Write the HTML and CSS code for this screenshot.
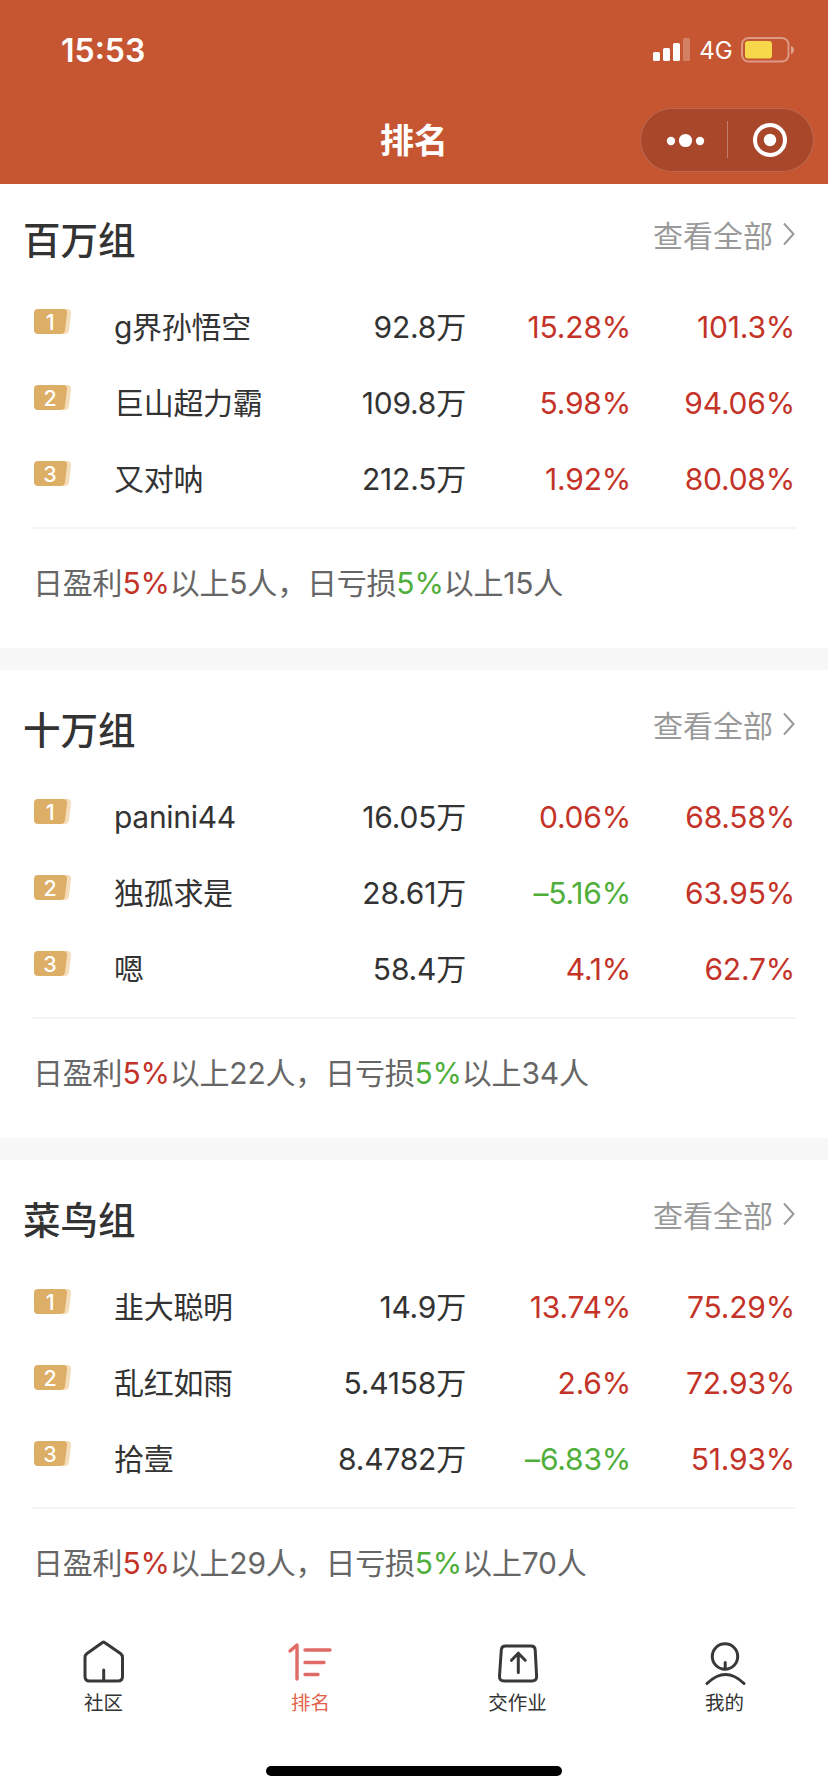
FILE: index.html
```html
<!DOCTYPE html>
<html lang="zh-CN">
<head>
    <meta charset="UTF-8">
    <meta name="viewport" content="width=device-width, initial-scale=1.0">
    <title>排名</title>
    <link rel="stylesheet" href="styles.css">
</head>
<body>
    <header class="header">
        <div class="status-bar">
            <span class="time">15:53</span>
            <div class="status-icons">
                <svg class="signal" width="38" height="24" viewBox="0 0 38 24" fill="#fff">
                    <rect x="0" y="14" width="7" height="9" rx="1.6"/>
                    <rect x="10" y="10" width="7" height="13" rx="1.6"/>
                    <rect x="20" y="5" width="7" height="18" rx="1.6"/>
                    <rect x="30" y="0" width="7" height="23" rx="1.6" opacity="0.25"/>
                </svg>
                <span class="network">4G</span>
                <svg class="battery" width="54" height="26" viewBox="0 0 54 26">
                    <rect x="1" y="1" width="46.5" height="23.5" rx="6.5" fill="none" stroke="#fff" stroke-opacity="0.4" stroke-width="2"/>
                    <rect x="4" y="4" width="27" height="17.5" rx="3" fill="#f7d84a"/>
                    <path d="M50 9 C54 10 54 16 50 17 Z" fill="#fff" fill-opacity="0.45"/>
                </svg>
            </div>
        </div>
        <div class="nav-bar">
            <h1>排名</h1>
            <div class="capsule">
                <svg width="174" height="64" viewBox="0 0 174 64" fill="#fff">
                    <circle cx="31" cy="33" r="4.2"/>
                    <circle cx="45.5" cy="32.5" r="6.6"/>
                    <circle cx="60" cy="33" r="4.2"/>
                    <rect x="87" y="13" width="1" height="37" opacity="0.3"/>
                    <circle cx="130" cy="32" r="15" fill="none" stroke="#fff" stroke-width="4"/>
                    <circle cx="130" cy="32" r="6.2"/>
                </svg>
            </div>
        </div>
    </header>

    <main class="content">
        <section class="group">
            <div class="group-head">
                <h2>百万组</h2>
                <a class="more">查看全部<svg width="14" height="24" viewBox="0 0 14 24"><path d="M2 1.5 L11.5 12 L2 22.5"/></svg></a>
            </div>
            <ul class="rank-list">
                <li><span class="badge">1</span><span class="name">g界孙悟空</span><span>92.8万</span><span class="up">15.28%</span><span class="up">101.3%</span></li>
                <li><span class="badge">2</span><span class="name">巨山超力霸</span><span>109.8万</span><span class="up">5.98%</span><span class="up">94.06%</span></li>
                <li><span class="badge">3</span><span class="name">又对呐</span><span>212.5万</span><span class="up">1.92%</span><span class="up">80.08%</span></li>
            </ul>
            <p class="summary">日盈利<span class="up">5%</span>以上5人，日亏损<span class="down">5%</span>以上15人</p>
        </section>

        <section class="group">
            <div class="group-head">
                <h2>十万组</h2>
                <a class="more">查看全部<svg width="14" height="24" viewBox="0 0 14 24"><path d="M2 1.5 L11.5 12 L2 22.5"/></svg></a>
            </div>
            <ul class="rank-list">
                <li><span class="badge">1</span><span class="name">panini44</span><span>16.05万</span><span class="up">0.06%</span><span class="up">68.58%</span></li>
                <li><span class="badge">2</span><span class="name">独孤求是</span><span>28.61万</span><span class="down">–5.16%</span><span class="up">63.95%</span></li>
                <li><span class="badge">3</span><span class="name">嗯</span><span>58.4万</span><span class="up">4.1%</span><span class="up">62.7%</span></li>
            </ul>
            <p class="summary">日盈利<span class="up">5%</span>以上22人，日亏损<span class="down">5%</span>以上34人</p>
        </section>

        <section class="group">
            <div class="group-head">
                <h2>菜鸟组</h2>
                <a class="more">查看全部<svg width="14" height="24" viewBox="0 0 14 24"><path d="M2 1.5 L11.5 12 L2 22.5"/></svg></a>
            </div>
            <ul class="rank-list">
                <li><span class="badge">1</span><span class="name">韭大聪明</span><span>14.9万</span><span class="up">13.74%</span><span class="up">75.29%</span></li>
                <li><span class="badge">2</span><span class="name">乱红如雨</span><span>5.4158万</span><span class="up">2.6%</span><span class="up">72.93%</span></li>
                <li><span class="badge">3</span><span class="name">拾壹</span><span>8.4782万</span><span class="down">–6.83%</span><span class="up">51.93%</span></li>
            </ul>
            <p class="summary">日盈利<span class="up">5%</span>以上29人，日亏损<span class="down">5%</span>以上70人</p>
        </section>
    </main>

    <footer class="tab-bar">
        <nav class="tabs">
            <a class="tab">
                <svg width="48" height="48" viewBox="0 0 48 48">
                    <path d="M24.5 4.5 Q23.5 3.8 22.5 4.5 L7 15.5 Q5 17 5 19.5 V38.5 Q5 43 9.5 43 H38 Q42.5 43 42.5 38.5 V19.5 Q42.5 17 40.5 15.5 Z"/>
                    <path d="M23.7 32 V42"/>
                </svg>
                <span>社区</span>
            </a>
            <a class="tab active">
                <svg width="48" height="48" viewBox="0 0 48 48">
                    <path d="M3 13 L10 7 V41"/>
                    <path d="M18 12 H43 M18 24.5 H37 M18 36.5 H31"/>
                </svg>
                <span>排名</span>
            </a>
            <a class="tab">
                <svg width="48" height="48" viewBox="0 0 48 48">
                    <path d="M11.5 8 H37 Q41 8 41.2 12 L42.6 38 Q42.8 43 38 43 H10 Q5.3 43 5.5 38 L7.3 12 Q7.6 8 11.5 8 Z"/>
                    <path d="M24.3 34.5 V15 M17.5 22.3 L24.3 15.3 L31.2 22.3"/>
                </svg>
                <span>交作业</span>
            </a>
            <a class="tab">
                <svg width="48" height="48" viewBox="0 0 48 48">
                    <circle cx="24" cy="18.5" r="12.7"/>
                    <path d="M24.2 24.5 V30.5"/>
                    <path d="M6 45.5 Q24.5 27.5 43 45.5"/>
                </svg>
                <span>我的</span>
            </a>
        </nav>
        <div class="home-indicator"></div>
    </footer>
</body>
</html>
```
FILE: styles.css
```css
* {
    box-sizing: border-box;
}

body {
    margin: 0;
    height: 100vh;
    display: flex;
    flex-direction: column;
    overflow: hidden;
    background: #fff;
    color: #333;
    font-family: Inter, "Noto Sans CJK SC", sans-serif;
    font-size: 30px;
}

h1, h2, p, ul {
    margin: 0;
    padding: 0;
    font-weight: 500;
}

/* Header */
.header {
    flex: none;
    height: 184px;
    background: #c65632;
    color: #fff;
}

.status-bar {
    height: 100px;
    padding: 0 33px 0 61px;
    display: flex;
    align-items: center;
    justify-content: space-between;
}

.time {
    font-size: 32px;
    font-weight: 600;
}

.status-icons {
    display: flex;
    align-items: center;
}

.network {
    width: 50px;
    padding-top: 2px;
    text-align: center;
    font-size: 24px;
    line-height: 28px;
}

.nav-bar {
    height: 84px;
    padding: 8px 14px 0 0;
    display: grid;
    grid-template-columns: 1fr 174px;
    align-items: start;
}

.nav-bar h1 {
    padding-left: 174px;
    margin-right: -14px;
    text-align: center;
    font-size: 34px;
    font-weight: 600;
    line-height: 66px;
}

.capsule {
    height: 64px;
    border-radius: 32px;
    background: #a9472b;
    box-shadow: inset 0 0 0 1px #c16a50;
}

.capsule svg {
    display: block;
}

/* Ranking groups */
.content {
    flex: 1;
    min-height: 0;
    overflow: hidden;
}

.group {
    height: 490px;
    padding: 0 32px;
    border-bottom: 22px solid #f7f7f7;
}

.group:first-child {
    height: 486px;
}

.group-head {
    height: 105px;
    margin-left: -9px;
    display: flex;
    justify-content: space-between;
}

.group:not(:first-child) .group-head {
    height: 109px;
    padding-top: 4px;
}

.group-head h2 {
    font-size: 37.5px;
    line-height: 114px;
}

.more {
    height: 99px;
    display: flex;
    align-items: center;
    gap: 9px;
    color: #999;
}

.more svg {
    fill: none;
    stroke: #999;
    stroke-width: 2;
}

.rank-list {
    height: 240px;
    border-bottom: 2px solid #f5f5f5;
    list-style: none;
    font-weight: 400;
    letter-spacing: -0.2px;
}

.rank-list li {
    height: 76px;
    padding: 0 1px 0 2px;
    display: grid;
    grid-template-columns: 80px 180px 1fr 165px 164px;
    line-height: 77px;
    text-align: right;
    white-space: nowrap;
}

.rank-list .name {
    text-align: left;
    letter-spacing: -0.3px;
}

.rank-list .badge {
    position: relative;
    z-index: 0;
    width: 32px;
    height: 25px;
    margin-top: 20px;
    border-radius: 4px;
    background: linear-gradient(#dcae66, #dcae66) left / 25px 25px no-repeat;
    color: #fff;
    font-size: 21.5px;
    font-weight: 500;
    line-height: 26px;
    text-align: center;
}

.badge::before,
.badge::after {
    content: "";
    position: absolute;
    z-index: -1;
    top: 0;
    right: 0;
    width: 20px;
    height: 25px;
    border-radius: 4px;
    background: #dcae66;
    transform: skewX(-7deg);
}

.badge::before {
    right: -4px;
    background: #f5dcb8;
}

.up {
    color: #c33328;
}

.down {
    color: #50ae3a;
}

.summary {
    padding-left: 1px;
    color: #666;
    font-weight: 400;
    letter-spacing: -0.2px;
    line-height: 108px;
}

/* Bottom tabs */
.tab-bar {
    flex: none;
    height: 166px;
    background: #fff;
}

.tabs {
    height: 140px;
    padding-top: 12px;
    display: grid;
    grid-template-columns: repeat(4, 1fr);
}

.tab {
    display: flex;
    flex-direction: column;
    align-items: center;
    font-size: 19.5px;
    line-height: 35px;
}

.tab svg {
    fill: none;
    stroke: #383838;
    stroke-width: 3;
    stroke-linecap: round;
    stroke-linejoin: round;
}

.tab.active {
    color: #e2624c;
}

.tab.active svg {
    stroke: #df6a66;
    stroke-width: 3.4;
}

.home-indicator {
    width: 296px;
    height: 10px;
    margin: 0 auto;
    border-radius: 5px;
    background: #000;
}
```
